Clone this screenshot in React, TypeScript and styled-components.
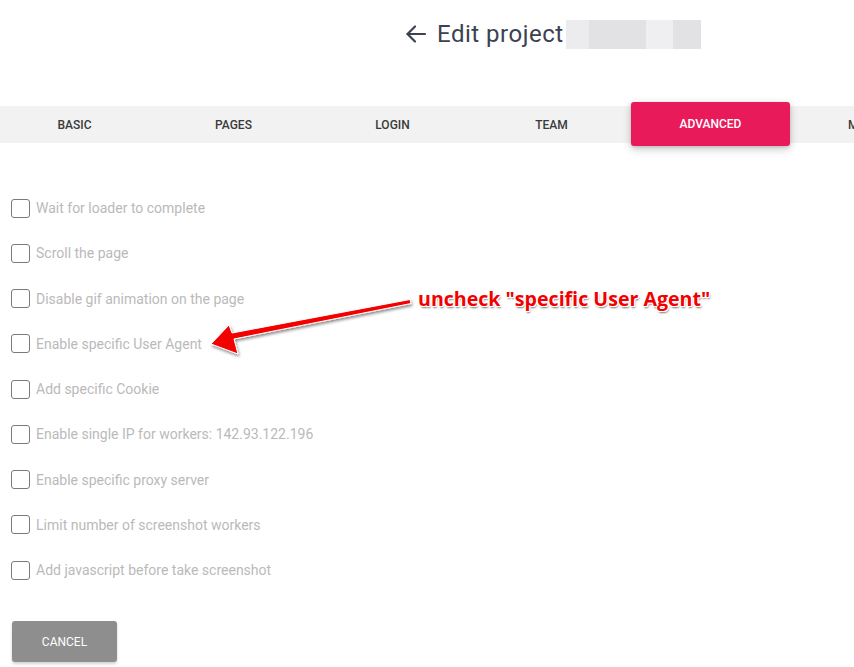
import React from "react";
import styled, { createGlobalStyle } from "styled-components";

const Global = createGlobalStyle`
  html, body { margin: 0; padding: 0; background: #fff; }
  body { font-family: Roboto, "Liberation Sans", sans-serif; overflow: hidden; }
`;

const Page = styled.div`
  position: relative;
  width: 854px;
  height: 667px;
  overflow: hidden;
`;

const Header = styled.div`
  display: flex;
  align-items: center;
  padding: 19px 0 0 404px;
  height: 30px;
`;

const BackIcon = styled.svg`
  width: 24px;
  height: 24px;
  margin-right: 9px;
  flex: none;
`;

const Title = styled.h1`
  margin: 0;
  font-family: Roboto, "Liberation Sans", sans-serif;
  font-weight: 400;
  font-size: 24px;
  line-height: 30px;
  letter-spacing: 0.5px;
  color: #3b4250;
`;

const Blur = styled.div`
  display: flex;
  height: 29px;
  margin-left: 2px;
`;

const BlurSeg = styled.div<{ $w: number; $c: string }>`
  width: ${(p) => p.$w}px;
  background: ${(p) => p.$c};
`;

const TabBar = styled.div`
  margin-top: 57px;
  height: 37px;
  background: #f2f2f2;
  display: flex;
  align-items: stretch;
  margin-left: -5px;
`;

const Tab = styled.div<{ $active?: boolean }>`
  flex: 0 0 159px;
  display: flex;
  align-items: center;
  justify-content: center;
  font-family: Roboto, "Liberation Sans", sans-serif;
  font-weight: 500;
  font-size: 12px;
  color: ${(p) => (p.$active ? "#fff" : "#3a3a3a")};
  text-transform: uppercase;
  white-space: nowrap;
  background: ${(p) => (p.$active ? "#e91a5a" : "transparent")};
  border-radius: ${(p) => (p.$active ? "3px" : "0")};
  margin: ${(p) => (p.$active ? "-4px 0 -3px" : "0")};
  padding-bottom: ${(p) => (p.$active ? "1px" : "0")};
  box-shadow: ${(p) =>
    p.$active ? "0 3px 8px rgba(0,0,0,0.22), 0 1px 3px rgba(0,0,0,0.12)" : "none"};
  position: relative;
  z-index: ${(p) => (p.$active ? 1 : 0)};
`;

const List = styled.div`
  margin-top: 42.4px;
  padding-left: 11px;
  display: flex;
  flex-direction: column;
`;

const Row = styled.label`
  height: 45.25px;
  display: flex;
  align-items: center;
  gap: 6px;
`;

const Box = styled.span`
  width: 17px;
  height: 17px;
  border: 1px solid #7a7a7a;
  border-radius: 3px;
  flex: none;
`;

const Label = styled.span`
  font-family: Roboto, "Liberation Sans", sans-serif;
  font-size: 14px;
  color: #bababa;
  line-height: 20px;
`;

const Cancel = styled.button`
  margin: 28.4px 0 0 12px;
  width: 105px;
  height: 41px;
  border: none;
  border-radius: 3px;
  background: #8e8e8e;
  color: #fff;
  font-family: Roboto, "Liberation Sans", sans-serif;
  font-size: 12px;
  text-transform: uppercase;
  box-shadow: 0 2px 3px rgba(0, 0, 0, 0.18);
`;

const Overlay = styled.svg`
  position: absolute;
  left: 0;
  top: 0;
  pointer-events: none;
`;

const Note = styled.div`
  position: absolute;
  left: 418px;
  top: 286px;
  font-family: "Open Sans", "DejaVu Sans", sans-serif;
  font-weight: 700;
  font-size: 19.6px;
  line-height: 26px;
  color: #f20000;
  white-space: nowrap;
  text-shadow:
    1px 0 0 #fff, -1px 0 0 #fff, 0 1px 0 #fff, 0 -1px 0 #fff,
    1px 1px 0 #fff, -1px -1px 0 #fff, 1px -1px 0 #fff, -1px 1px 0 #fff,
    1px 2px 2px rgba(0, 0, 0, 0.55);
`;

const tabs = ["Basic", "Pages", "Login", "Team", "Advanced", "Mobile"];
const options = [
  "Wait for loader to complete",
  "Scroll the page",
  "Disable gif animation on the page",
  "Enable specific User Agent",
  "Add specific Cookie",
  "Enable single IP for workers: 142.93.122.196",
  "Enable specific proxy server",
  "Limit number of screenshot workers",
  "Add javascript before take screenshot",
];

export default function App() {
  return (
    <Page>
      <Global />
      <Header>
        <BackIcon viewBox="0 0 24 24" fill="none" stroke="#3b4250" strokeWidth="2.2" strokeLinecap="round" strokeLinejoin="round">
          <path d="M21 12H3.5" />
          <path d="M11 4.5L3.5 12L11 19.5" />
        </BackIcon>
        <Title>Edit project</Title>
        <Blur>
          <BlurSeg $w={23} $c="#ececee" />
          <BlurSeg $w={57} $c="#e2e2e5" />
          <BlurSeg $w={27} $c="#efeff1" />
          <BlurSeg $w={28} $c="#e2e2e5" />
        </Blur>
      </Header>
      <TabBar>
        {tabs.map((t) => (
          <Tab key={t} $active={t === "Advanced"}>
            {t}
          </Tab>
        ))}
      </TabBar>
      <List>
        {options.map((o) => (
          <Row key={o}>
            <Box />
            <Label>{o}</Label>
          </Row>
        ))}
      </List>
      <Cancel>Cancel</Cancel>

      <Overlay width="854" height="667" viewBox="0 0 854 667">
        <defs>
          <filter id="sh" x="-10%" y="-30%" width="120%" height="160%">
            <feDropShadow dx="1" dy="2" stdDeviation="1.5" floodColor="#000" floodOpacity="0.45" />
          </filter>
        </defs>
        <polygon
          points="410,299.5 411,303.5 234,339 238,354 211,344 229,325 232,333"
          fill="#f30000"
          stroke="#fff"
          strokeWidth="1"
          strokeLinejoin="round"
          filter="url(#sh)"
        />
      </Overlay>
      <Note>uncheck "specific User Agent"</Note>
    </Page>
  );
}
